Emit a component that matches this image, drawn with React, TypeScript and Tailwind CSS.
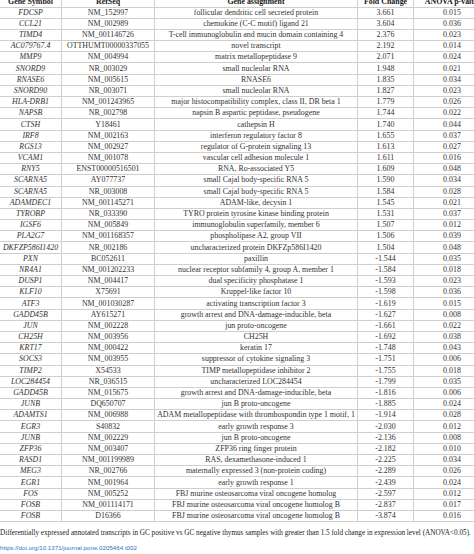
const rows: [string, string, string, string, string][] = [
  ["FDCSP", "NM_152997", "follicular dendritic cell secreted protein", "3.661", "0.015"],
  ["CCL21", "NM_002989", "chemokine (C-C motif) ligand 21", "3.604", "0.036"],
  ["TIMD4", "NM_001146726", "T-cell immunoglobulin and mucin domain containing 4", "2.376", "0.023"],
  ["AC079767.4", "OTTHUMT00000337055", "novel transcript", "2.192", "0.014"],
  ["MMP9", "NM_004994", "matrix metallopeptidase 9", "2.071", "0.024"],
  ["SNORD9", "NR_003029", "small nucleolar RNA", "1.948", "0.021"],
  ["RNASE6", "NM_005615", "RNASE6", "1.835", "0.034"],
  ["SNORD90", "NR_003071", "small nucleolar RNA", "1.827", "0.023"],
  ["HLA-DRB1", "NM_001243965", "major histocompatibility complex, class II, DR beta 1", "1.779", "0.026"],
  ["NAPSB", "NR_002798", "napsin B aspartic peptidase, pseudogene", "1.744", "0.022"],
  ["CTSH", "Y18461", "cathepsin H", "1.740", "0.044"],
  ["IRF8", "NM_002163", "interferon regulatory factor 8", "1.655", "0.037"],
  ["RGS13", "NM_002927", "regulator of G-protein signaling 13", "1.613", "0.027"],
  ["VCAM1", "NM_001078", "vascular cell adhesion molecule 1", "1.611", "0.016"],
  ["RNY5", "ENST00000516501", "RNA, Ro-associated Y5", "1.609", "0.048"],
  ["SCARNA5", "AY077737", "small Cajal body-specific RNA 5", "1.590", "0.034"],
  ["SCARNA5", "NR_003008", "small Cajal body-specific RNA 5", "1.584", "0.028"],
  ["ADAMDEC1", "NM_001145271", "ADAM-like, decysin 1", "1.545", "0.021"],
  ["TYROBP", "NR_033390", "TYRO protein tyrosine kinase binding protein", "1.531", "0.037"],
  ["IGSF6", "NM_005849", "immunoglobulin superfamily, member 6", "1.507", "0.012"],
  ["PLA2G7", "NM_001168357", "phospholipase A2, group VII", "1.506", "0.039"],
  ["DKFZP586I1420", "NR_002186", "uncharacterized protein DKFZp586I1420", "1.504", "0.048"],
  ["PXN", "BC052611", "paxillin", "-1.544", "0.035"],
  ["NR4A1", "NM_001202233", "nuclear receptor subfamily 4, group A, member 1", "-1.584", "0.018"],
  ["DUSP1", "NM_004417", "dual specificity phosphatase 1", "-1.593", "0.023"],
  ["KLF10", "X75691", "Kruppel-like factor 10", "-1.598", "0.036"],
  ["ATF3", "NM_001030287", "activating transcription factor 3", "-1.619", "0.015"],
  ["GADD45B", "AY615271", "growth arrest and DNA-damage-inducible, beta", "-1.627", "0.008"],
  ["JUN", "NM_002228", "jun proto-oncogene", "-1.661", "0.022"],
  ["CH25H", "NM_003956", "CH25H", "-1.692", "0.038"],
  ["KRT17", "NM_000422", "keratin 17", "-1.748", "0.043"],
  ["SOCS3", "NM_003955", "suppressor of cytokine signaling 3", "-1.751", "0.006"],
  ["TIMP2", "X54533", "TIMP metallopeptidase inhibitor 2", "-1.755", "0.018"],
  ["LOC284454", "NR_036515", "uncharacterized LOC284454", "-1.799", "0.035"],
  ["GADD45B", "NM_015675", "growth arrest and DNA-damage-inducible, beta", "-1.816", "0.006"],
  ["JUNB", "DQ650707", "jun B proto-oncogene", "-1.885", "0.024"],
  ["ADAMTS1", "NM_006988", "ADAM metallopeptidase with thrombospondin type 1 motif, 1", "-1.914", "0.028"],
  ["EGR3", "S40832", "early growth response 3", "-2.030", "0.012"],
  ["JUNB", "NM_002229", "jun B proto-oncogene", "-2.136", "0.008"],
  ["ZFP36", "NM_003407", "ZFP36 ring finger protein", "-2.182", "0.010"],
  ["RASD1", "NM_001199989", "RAS, dexamethasone-induced 1", "-2.225", "0.034"],
  ["MEG3", "NR_002766", "maternally expressed 3 (non-protein coding)", "-2.289", "0.026"],
  ["EGR1", "NM_001964", "early growth response 1", "-2.439", "0.024"],
  ["FOS", "NM_005252", "FBJ murine osteosarcoma viral oncogene homolog", "-2.597", "0.012"],
  ["FOSB", "NM_001114171", "FBJ murine osteosarcoma viral oncogene homolog B", "-2.837", "0.017"],
  ["FOSB", "D16366", "FBJ murine osteosarcoma viral oncogene homolog B", "-3.874", "0.016"],
];

const cols = "grid grid-cols-[62px_93px_203px_56px_76px]";
const cell = "flex items-center justify-center border-r border-[#cfcfcf] whitespace-nowrap overflow-hidden";

export default function App() {
  return (
    <div className="w-[474px] h-[554px] overflow-hidden bg-white text-[#333]" style={{ fontFamily: '"Liberation Serif", "Times New Roman", serif' }}>
      <div className="w-[490px] -mt-[3px] text-[7.9px] leading-none">
        <div className={`${cols} h-[10.5px] border-b border-[#cfcfcf] font-bold text-[#1a1a1a]`}>
          <div className={cell}>Gene Symbol</div>
          <div className={cell}>RefSeq</div>
          <div className={cell}>Gene assignment</div>
          <div className={cell}>Fold Change</div>
          <div className="flex items-center justify-center whitespace-nowrap">ANOVA p-value</div>
        </div>
        {rows.map((r, i) => (
          <div key={i} className={`${cols} h-[11.2px] border-b border-[#cfcfcf]`}>
            <div className={`${cell} italic`}>{r[0]}</div>
            <div className={cell}>{r[1]}</div>
            <div className={cell}>{r[2]}</div>
            <div className={cell}>{r[3]}</div>
            <div className="flex items-center justify-center whitespace-nowrap">{r[4]}</div>
          </div>
        ))}
      </div>
      <p className="mt-[8px] text-[7.2px] leading-none whitespace-nowrap text-[#222]">
        Differentially expressed annotated transcripts in GC positive vs GC negative thymus samples with greater than 1.5 fold change in expression level (ANOVA&lt;0.05).
      </p>
      <p className="mt-[8px] text-[6.2px] leading-none whitespace-nowrap text-[#3a6fc4]" style={{ fontFamily: '"Liberation Sans", Arial, sans-serif' }}>
        https://doi.org/10.1371/journal.pone.0205464.t002
      </p>
    </div>
  );
}
